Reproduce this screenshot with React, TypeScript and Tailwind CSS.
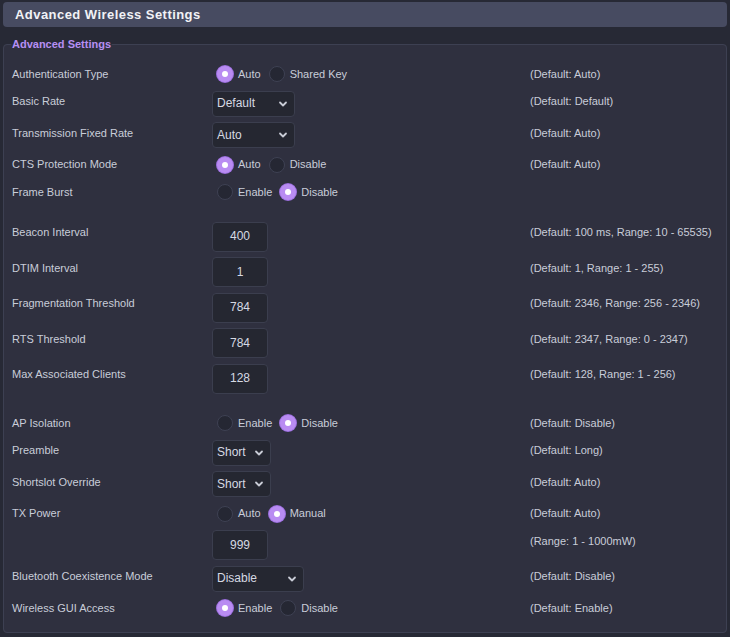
import { ReactNode } from 'react';

const font = { fontFamily: '"Liberation Sans", Arial, sans-serif' };

function Radio({ checked, label }: { checked?: boolean; label: string }) {
  return (
    <label className="flex items-center gap-[5px]">
      {checked ? (
        <span className="flex h-4 w-4 items-center justify-center rounded-full bg-[#b98cf2] shadow-[0_0_0_1px_#9c6fe0]">
          <span className="h-[6px] w-[6px] rounded-full bg-white" />
        </span>
      ) : (
        <span className="h-4 w-4 rounded-full border border-[#3e4153] bg-[#252733]" />
      )}
      <span>{label}</span>
    </label>
  );
}

function RadioGroup({ options, value }: { options: string[]; value: string }) {
  return (
    <div className="flex h-[22px] items-center gap-[8px] pl-[5px]">
      {options.map((o) => (
        <Radio key={o} label={o} checked={o === value} />
      ))}
    </div>
  );
}

function Select({ value, width }: { value: string; width: string }) {
  return (
    <div
      className={`flex h-[26px] items-center justify-between rounded-[4px] border border-[#3b3e4e] bg-[#252731] pl-[4px] pr-[6px] text-[12px] text-[#d6d9e3] ${width}`}
    >
      <span>{value}</span>
      <svg width="10" height="10" viewBox="0 0 10 10" className="text-[#c9ccd6]">
        <path d="M2 3.5 L5 6.5 L8 3.5" fill="none" stroke="currentColor" strokeWidth="1.8" strokeLinecap="round" strokeLinejoin="round" />
      </svg>
    </div>
  );
}

function NumInput({ value }: { value: string }) {
  return (
    <div className="flex h-[30px] w-[56px] items-center justify-center rounded-[4px] border border-[#3b3e4e] bg-[#252731] text-[12px] text-[#d6d9e3]">
      {value}
    </div>
  );
}

function Row({ label, control, hint, className = '' }: { label?: string; control: ReactNode; hint?: string; className?: string }) {
  return (
    <div className={`grid grid-cols-[200px_318px_1fr] items-start ${className}`}>
      <div className="flex h-[22px] items-center">{label}</div>
      <div>{control}</div>
      <div className="flex h-[22px] items-center">{hint}</div>
    </div>
  );
}

export default function App() {
  return (
    <div className="min-h-screen bg-[#272935] px-[3px] pt-[2px] pb-[4px] text-[11px] leading-[13px] text-[#c9cdd9]" style={font}>
      <div className="flex h-[25px] items-center rounded-[4px] bg-[#474b61] pl-[12px] text-[13px] font-bold tracking-[0.45px] text-[#f1f2f6]">
        Advanced Wireless Settings
      </div>

      <fieldset className="mt-[11px] rounded-[4px] border border-[#3d4052] bg-[#2f303f] pl-[8px] pr-[8px] pt-[12px] pb-[13px]">
        <legend className="ml-[-1px] px-[1px] text-[11px] font-bold text-[#b68ff3]">Advanced Settings</legend>

        <div className="flex flex-col gap-[5.5px]">
          <Row label="Authentication Type" control={<RadioGroup options={['Auto', 'Shared Key']} value="Auto" />} hint="(Default: Auto)" />
          <Row label="Basic Rate" control={<Select value="Default" width="w-[83px]" />} hint="(Default: Default)" />
          <Row label="Transmission Fixed Rate" control={<Select value="Auto" width="w-[83px]" />} hint="(Default: Auto)" />
          <Row label="CTS Protection Mode" control={<RadioGroup options={['Auto', 'Disable']} value="Auto" />} hint="(Default: Auto)" />
          <Row label="Frame Burst" control={<RadioGroup options={['Enable', 'Disable']} value="Disable" />} />

          <Row className="mt-[13px]" label="Beacon Interval" control={<NumInput value="400" />} hint="(Default: 100 ms, Range: 10 - 65535)" />
          <Row label="DTIM Interval" control={<NumInput value="1" />} hint="(Default: 1, Range: 1 - 255)" />
          <Row label="Fragmentation Threshold" control={<NumInput value="784" />} hint="(Default: 2346, Range: 256 - 2346)" />
          <Row label="RTS Threshold" control={<NumInput value="784" />} hint="(Default: 2347, Range: 0 - 2347)" />
          <Row label="Max Associated Clients" control={<NumInput value="128" />} hint="(Default: 128, Range: 1 - 256)" />

          <Row className="mt-[13px]" label="AP Isolation" control={<RadioGroup options={['Enable', 'Disable']} value="Disable" />} hint="(Default: Disable)" />
          <Row label="Preamble" control={<Select value="Short" width="w-[59px]" />} hint="(Default: Long)" />
          <Row label="Shortslot Override" control={<Select value="Short" width="w-[59px]" />} hint="(Default: Auto)" />
          <Row label="TX Power" control={<RadioGroup options={['Auto', 'Manual']} value="Manual" />} hint="(Default: Auto)" />
          <Row control={<NumInput value="999" />} hint="(Range: 1 - 1000mW)" />
          <Row label="Bluetooth Coexistence Mode" control={<Select value="Disable" width="w-[92px]" />} hint="(Default: Disable)" />
          <Row label="Wireless GUI Access" control={<RadioGroup options={['Enable', 'Disable']} value="Enable" />} hint="(Default: Enable)" />
        </div>
      </fieldset>
    </div>
  );
}
